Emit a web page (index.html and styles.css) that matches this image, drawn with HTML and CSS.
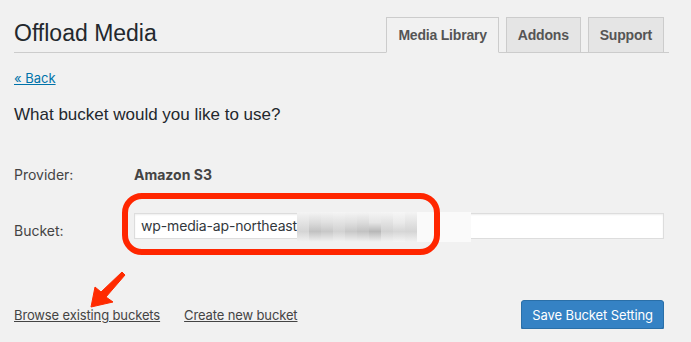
FILE: index.html
```html
<!DOCTYPE html>
<html lang="en">
<head>
    <meta charset="UTF-8">
    <title>Offload Media</title>
    <link rel="stylesheet" href="styles.css">
</head>
<body>

<div class="wrap">
    <div class="header">
        <h1>Offload Media</h1>
        <nav class="tabs">
            <a class="tab active" href="#">Media Library</a>
            <a class="tab" href="#">Addons</a>
            <a class="tab" href="#">Support</a>
        </nav>
    </div>

    <a class="back" href="#">&laquo; Back</a>
    <h3>What bucket would you like to use?</h3>

    <div class="field-row provider-row">
        <span class="label">Provider:</span>
        <strong>Amazon S3</strong>
    </div>
    <div class="field-row bucket-row">
        <span class="label">Bucket:</span>
        <div class="bucket-input">
            <span class="value">wp-media-ap-northeast</span>
            <span class="blurred">
                <i class="px a"></i><i class="px b"></i><i class="px c"></i><i class="px d"></i><i class="px c"></i><i class="px b"></i><i class="px e"></i><i class="px d"></i><i class="px f"></i><i class="px a"></i>
            </span>
            <span class="fade"></span>
        </div>
        <!-- highlight drawn over the input -->
        <div class="highlight"></div>
    </div>

    <div class="footer">
        <div class="links">
            <a href="#">Browse existing buckets</a>
            <a href="#">Create new bucket</a>
        </div>
        <button type="button" class="button-primary">Save Bucket Setting</button>
        <svg class="arrow" width="44" height="44" viewBox="0 0 44 44">
            <path d="M5 38 L9 18 L15 23 L36 3 L39 6 L20 28 L27 33 Z" fill="#ff2a00" stroke="#ff2a00" stroke-width="1" stroke-linejoin="round"/>
        </svg>
    </div>
</div>

</body>
</html>
```

FILE: styles.css
```css
body { margin: 0; background: #f1f1f1; color: #444; font-family: Inter, "Liberation Sans", Arial, sans-serif; font-size: 13px; }
.wrap { padding: 0 22px 0 14px; position: relative; }

.header { display: flex; justify-content: space-between; align-items: flex-end; border-bottom: 1px solid #ccc; height: 52px; }
h1 { margin: 0 0 5px; font-family: "Liberation Sans", Arial, sans-serif; font-size: 23px; font-weight: 400; color: #23282d; }
.tabs { display: flex; gap: 7px; margin-right: 5px; margin-bottom: -1px; }
.tab { display: block; padding: 0 11px; height: 34px; line-height: 34px; border: 1px solid #ccc; background: #e5e5e5; color: #555; font-family: "Liberation Sans", Arial, sans-serif; font-size: 14px; font-weight: bold; letter-spacing: -0.2px; text-decoration: none; }
.tab.active { background: #f1f1f1; border-bottom-color: #f1f1f1; }

.back { display: inline-block; margin-top: 17px; color: #0073aa; font-size: 13px; }
h3 { margin: 19px 0 0; font-family: "Liberation Sans", Arial, sans-serif; font-size: 17px; font-weight: 400; color: #23282d; }

.field-row { display: flex; align-items: flex-start; position: relative; line-height: 20px; }
.label { width: 120px; font-size: 14px; color: #444; }
.provider-row { margin-top: 40px; }
.provider-row strong { font-size: 14px; font-weight: 700; color: #444; }
.bucket-row { margin-top: 28px; }
.bucket-row .label { margin-top: 8px; }

.bucket-input { flex: 1; height: 24px; margin-right: 5px; border: 1px solid #ddd; background: #fff; display: flex; align-items: center; padding-left: 6px; box-shadow: inset 0 1px 2px rgba(0,0,0,.07); }
.value { font-size: 14px; letter-spacing: -0.15px; color: #32373c; }
.blurred { display: flex; height: 30px; margin-top: 2px; }
.px { display: block; width: 12px; height: 100%; background: linear-gradient(#f4f4f4, #e3e3e3 35%, #d5d5d5 65%, #f2f2f2); }
.px.b { background: linear-gradient(#f4f4f4, #dcdcdc 35%, #c2c2c2 65%, #f2f2f2); }
.px.c { background: linear-gradient(#f4f4f4, #e0e0e0 35%, #c8c8c8 65%, #f2f2f2); }
.px.d { background: linear-gradient(#f5f5f5, #e2e2e2 35%, #d2d2d2 65%, #f3f3f3); }
.px.e { background: linear-gradient(#f4f4f4, #e5e5e5 35%, #b8b8b8 65%, #f2f2f2); }
.px.f { background: linear-gradient(#f6f6f6, #eaeaea 35%, #d6d6d6 65%, #f5f5f5); }
.fade { display: block; width: 54px; height: 30px; margin-top: 2px; background: #fafafa; }

.highlight { position: absolute; left: 108px; top: -20px; width: 306px; height: 50px; border: 6px solid #ff2600; border-radius: 20px; }

.footer { display: flex; justify-content: space-between; align-items: center; margin-top: 59px; position: relative; }
.links { display: flex; gap: 24px; }
.links a { color: #444; font-size: 13px; letter-spacing: -0.13px; }
.button-primary { margin-right: 5px; height: 29px; padding: 0 10px; background: #3582c4; border: 1px solid #2a6fa8; border-radius: 3px; color: #fff; font-family: inherit; font-size: 13px; letter-spacing: -0.1px; box-shadow: 0 1px 0 #2a6fa8; }
.arrow { position: absolute; left: 72px; top: -31px; }
```
